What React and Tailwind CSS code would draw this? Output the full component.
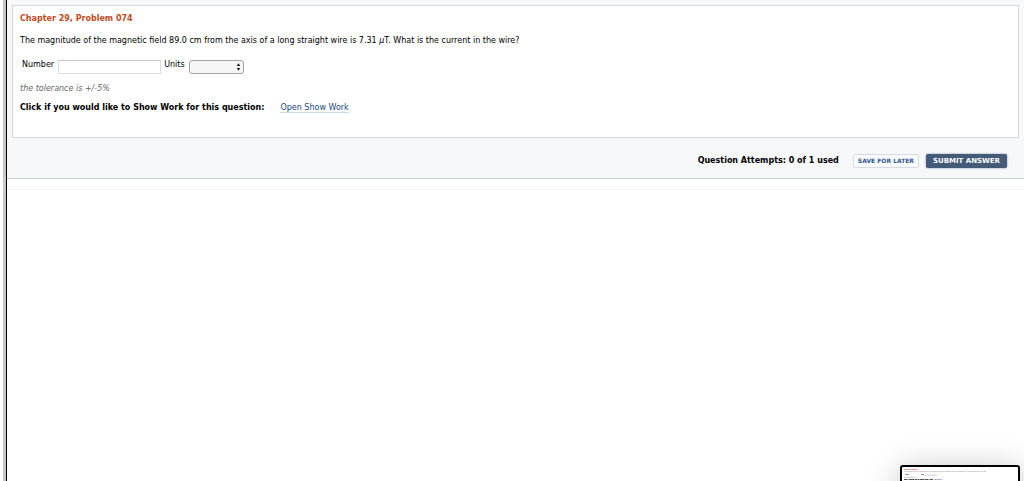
import { useState } from "react";

const UNITS = ["A", "mA", "T", "N", "V"];

function UnitSelect({ value, onChange }) {
  return (
    <div className="relative ml-1 mt-px">
      <select
        id="units"
        value={value}
        onChange={(e) => onChange(e.target.value)}
        className="block h-[14px] w-[55px] appearance-none rounded-[3px] border border-[#a3a3a3] bg-[#f6f6f6] px-1 text-[8px] leading-[12px]"
      >
        <option value=""></option>
        {UNITS.map((u) => (
          <option key={u} value={u}>
            {u}
          </option>
        ))}
      </select>
      <svg
        viewBox="0 0 5 8"
        className="pointer-events-none absolute right-[3px] top-[3px] h-[8px] w-[5px]"
        aria-hidden="true"
      >
        <path d="M2.5 0.3 4.2 3H.8zM2.5 7.7 .8 5h3.4z" fill="#111" />
      </svg>
    </div>
  );
}

function Thumbnail() {
  return (
    <div className="fixed -bottom-[56px] right-[4px] h-[72px] w-[120px] overflow-hidden rounded-[3px] border-2 border-black bg-white shadow-[0_4px_32px_rgba(0,0,0,0.25)]">
      <svg viewBox="0 0 116 68" className="h-full w-full" aria-hidden="true">
        <g fill="none" strokeWidth="1">
          <path d="M2 2.5h14" stroke="#dba492" strokeDasharray="5 .4 2 .4" />
          <path d="M2 4.5h82" stroke="#cfcfcf" strokeDasharray="2 .6 6 .5 3 .7" />
          <path d="M3 7.5h4M19 7.5h3" stroke="#999" />
          <path d="M22 8.2h13" stroke="#cfcfcf" />
          <path d="M2 10.5h11" stroke="#ccc" strokeDasharray="2 .5 4 .5" />
          <path d="M2 12.5h29" stroke="#555" strokeDasharray="3 .5 1 .5 5 .5" />
          <path d="M32 12.5h8" stroke="#9db1c9" strokeDasharray="3 .4" />
        </g>
      </svg>
    </div>
  );
}

export default function App() {
  const [answer, setAnswer] = useState("");
  const [unit, setUnit] = useState("");

  return (
    <div className="flex min-h-screen bg-white pl-[3px] font-['DejaVu_Sans',Verdana,sans-serif] text-[8px] leading-[12px] text-black">
      <div className="w-[4px] shrink-0 border-r border-black bg-[#c8c8c8]" />
      <main className="min-w-0 flex-1">
        <form
          onSubmit={(e) => e.preventDefault()}
          className="border-b border-[#c9ced6] bg-[#f7f8fa] pt-[5px]"
        >
          <section className="mx-[5px] border border-[#d0d5e0] bg-white px-[7px] pb-[23px] pt-[7px]">
            <h1 className="font-bold text-[#c14a22]">Chapter 29, Problem 074</h1>
            <p className="mt-[10px]">
              The magnitude of the magnetic field 89.0 cm from the axis of a long
              straight wire is 7.31 <i>μ</i>T. What is the current in the wire?
            </p>
            <div className="mt-3 flex items-start pl-[2px]">
              <label htmlFor="number">Number</label>
              <input
                id="number"
                type="text"
                value={answer}
                onChange={(e) => setAnswer(e.target.value)}
                className="ml-1 mr-[3px] mt-px block h-[14px] w-[103px] border border-[#dedede] border-t-[#c8c8c8] bg-white px-1"
              />
              <label htmlFor="units">Units</label>
              <UnitSelect value={unit} onChange={setUnit} />
            </div>
            <p className="mt-[9px] italic text-[#666]">the tolerance is +/-5%</p>
            <p className="mt-[7px] flex gap-4">
              <b>Click if you would like to Show Work for this question:</b>
              <a
                href="#show-work"
                className="h-[11px] border-b border-[#cfd9e4] leading-[11px] text-[#174a7c]"
              >
                Open Show Work
              </a>
            </p>
          </section>
          <div className="flex items-center justify-end pb-[10px] pr-[17px] pt-4">
            <b className="mr-[14px]">Question Attempts: 0 of 1 used</b>
            <button
              type="button"
              className="mr-[7px] h-[14px] rounded-[2px] border border-[#d5dae4] bg-[#fbfcfe] px-1 text-[6px] font-bold leading-[12px] text-[#2f5490]"
            >
              SAVE FOR LATER
            </button>
            <button
              type="submit"
              className="h-[14px] rounded-[2px] bg-[#435b76] px-[7px] text-[7px] font-bold leading-[14px] text-white shadow-[0_0_2px_#6b7f99]"
            >
              SUBMIT ANSWER
            </button>
          </div>
        </form>
        <div className="h-[11px] border-b border-[#f4f4f4]" />
      </main>
      <Thumbnail />
    </div>
  );
}
